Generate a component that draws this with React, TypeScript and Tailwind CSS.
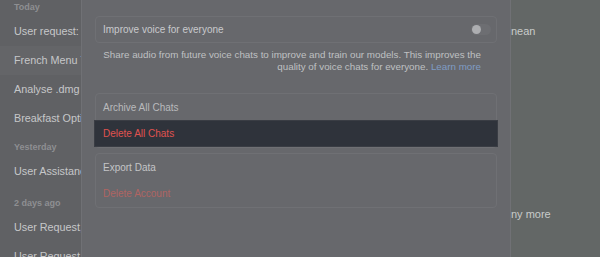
import React from "react";

const font = { fontFamily: "'Liberation Sans', Arial, sans-serif" };

function SideItem({ text, active }: { text: string; active?: boolean }) {
  return (
    <div className={`h-[29px] flex items-center pl-[14px] whitespace-nowrap text-[10.8px] text-[#c6c7c9] ${active ? "bg-[#646568]" : ""}`}>
      {text}
    </div>
  );
}

function SideHead({ text, extra }: { text: string; extra?: boolean }) {
  return (
    <div className={`${extra ? "pt-[8px] h-[27px]" : "pt-[5px] h-[24px]"} flex items-center pl-[14px] text-[9px] font-bold text-[#8e8f92] whitespace-nowrap`}>{text}</div>
  );
}

export default function App() {
  return (
    <div className="w-[600px] h-[257px] flex overflow-hidden bg-[#606164]" style={font}>
      <div className="w-[81px] shrink-0 overflow-hidden -mt-[7px]">
        <SideHead text="Today" />
        <SideItem text="User request: Summarize" />
        <SideItem text="French Menu Translation" active />
        <SideItem text="Analyse .dmg file" />
        <SideItem text="Breakfast Options" />
        <SideHead text="Yesterday" />
        <SideItem text="User Assistance" />
        <SideHead text="2 days ago" extra />
        <SideItem text="User Request, Summary" />
        <SideItem text="User Request" />
      </div>
      <div className="w-[430px] shrink-0 bg-[#67686c] border-l border-r border-[#707175] px-[13px] pt-[16px]">
        <div className="h-[27px] border border-[#6f7074] rounded-[4px] flex items-center justify-between pl-[7px] pr-[5px]">
          <span className="text-[10px] text-[#c9cacc]">Improve voice for everyone</span>
          <div className="w-[20px] h-[11px] rounded-full bg-[#6d6e72] flex items-center pl-[1px]">
            <div className="w-[9px] h-[9px] rounded-full bg-[#adaeb1]" />
          </div>
        </div>
        <div className="text-right pr-[16px] pl-[7px] mt-[6px] text-[9.8px] leading-[12px] text-[#bfc0c2]">
          Share audio from future voice chats to improve and train our models. This improves the quality of voice chats for everyone.{" "}
          <span className="text-[#7f9cc4]">Learn more</span>
        </div>
        <div className="mt-[20px] border border-[#6f7074] rounded-[4px]">
          <div className="h-[26px] flex items-center pl-[7px] text-[10px] text-[#b9babc]">Archive All Chats</div>
          <div className="h-[27px] flex items-center text-[10px] text-[#e0524f] bg-[#2f333b] -mx-[2px] pl-[8px] border border-[#3a3d44]">Delete All Chats</div>
        </div>
        <div className="mt-[5px] border border-[#6f7074] rounded-[4px]">
          <div className="h-[26px] flex items-center pl-[7px] text-[10px] text-[#c4c5c7]">Export Data</div>
          <div className="h-[27px] flex items-center pl-[7px] text-[10px] text-[#b06462]">Delete Account</div>
        </div>
      </div>
      <div className="flex-1 bg-[#636766] relative overflow-hidden text-[11px] text-[#c8cbca]">
        <div className="absolute left-0 top-[23px] whitespace-nowrap">nean</div>
        <div className="absolute left-0 top-[206px] whitespace-nowrap">ny more</div>
      </div>
    </div>
  );
}
